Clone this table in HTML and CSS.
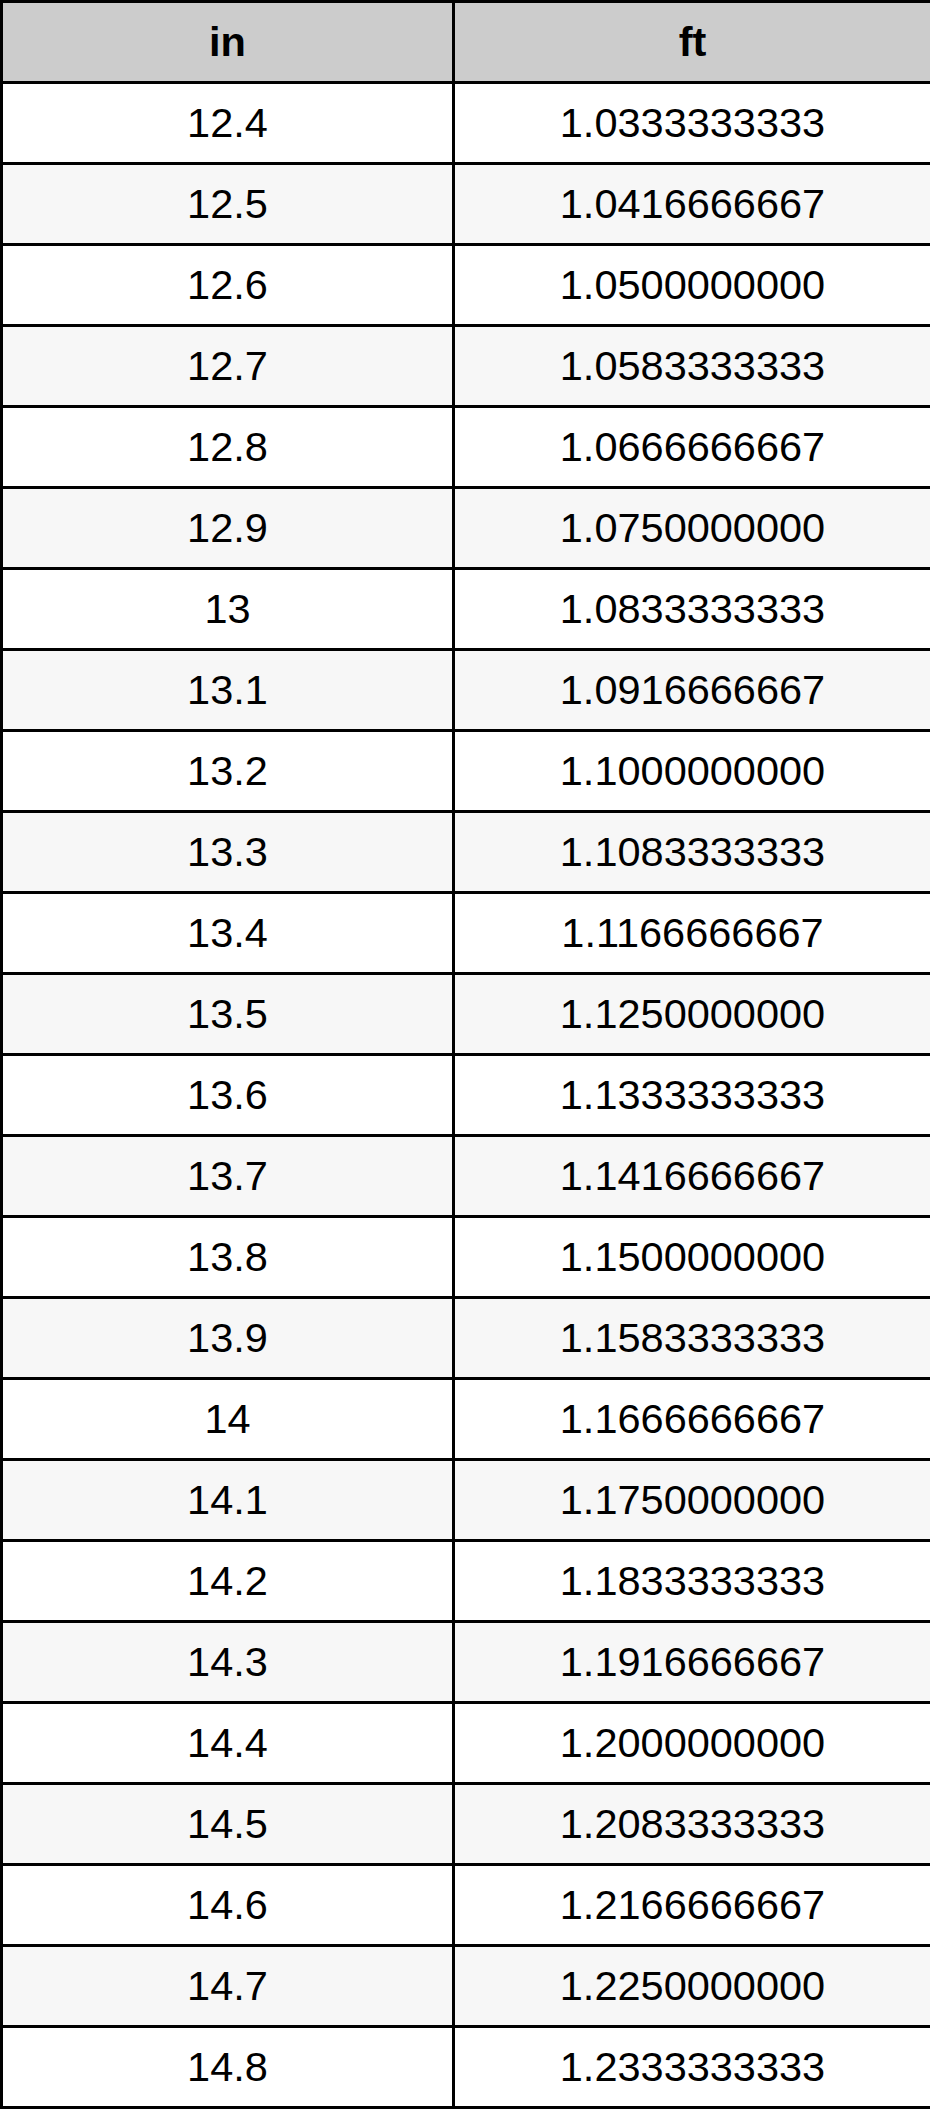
FILE: index.html
```html
<!DOCTYPE html>
<html>
<head>
<meta charset="utf-8">
<link rel="stylesheet" href="styles.css">
</head>
<body>
<table class="conv">
<colgroup><col class="c1"><col class="c2"></colgroup>
<thead>
<tr><th>in</th><th>ft</th></tr>
</thead>
<tbody>
<tr><td>12.4</td><td>1.0333333333</td></tr>
<tr><td>12.5</td><td>1.0416666667</td></tr>
<tr><td>12.6</td><td>1.0500000000</td></tr>
<tr><td>12.7</td><td>1.0583333333</td></tr>
<tr><td>12.8</td><td>1.0666666667</td></tr>
<tr><td>12.9</td><td>1.0750000000</td></tr>
<tr><td>13</td><td>1.0833333333</td></tr>
<tr><td>13.1</td><td>1.0916666667</td></tr>
<tr><td>13.2</td><td>1.1000000000</td></tr>
<tr><td>13.3</td><td>1.1083333333</td></tr>
<tr><td>13.4</td><td>1.1166666667</td></tr>
<tr><td>13.5</td><td>1.1250000000</td></tr>
<tr><td>13.6</td><td>1.1333333333</td></tr>
<tr><td>13.7</td><td>1.1416666667</td></tr>
<tr><td>13.8</td><td>1.1500000000</td></tr>
<tr><td>13.9</td><td>1.1583333333</td></tr>
<tr><td>14</td><td>1.1666666667</td></tr>
<tr><td>14.1</td><td>1.1750000000</td></tr>
<tr><td>14.2</td><td>1.1833333333</td></tr>
<tr><td>14.3</td><td>1.1916666667</td></tr>
<tr><td>14.4</td><td>1.2000000000</td></tr>
<tr><td>14.5</td><td>1.2083333333</td></tr>
<tr><td>14.6</td><td>1.2166666667</td></tr>
<tr><td>14.7</td><td>1.2250000000</td></tr>
<tr><td>14.8</td><td>1.2333333333</td></tr>
</tbody>
</table>
</body>
</html>
```

FILE: styles.css
```css
html, body {
  margin: 0;
  padding: 0;
  background: #ffffff;
}

.conv {
  width: 930px;
  border-collapse: collapse;
  table-layout: fixed;
  font-family: "Liberation Sans", Arial, sans-serif;
  font-size: 41.5px;
  color: #000000;
}

.c1 { width: 452px; }
.c2 { width: 478px; }

.conv th,
.conv td {
  border: 3px solid #000000;
  height: 78px;
  padding: 0;
  text-align: center;
  vertical-align: middle;
  line-height: 1;
}

.conv th {
  background: #cccccc;
  font-weight: bold;
}

.conv tbody tr:nth-child(odd) td {
  background: #ffffff;
}

.conv tbody tr:nth-child(even) td {
  background: #f7f7f7;
}
```
